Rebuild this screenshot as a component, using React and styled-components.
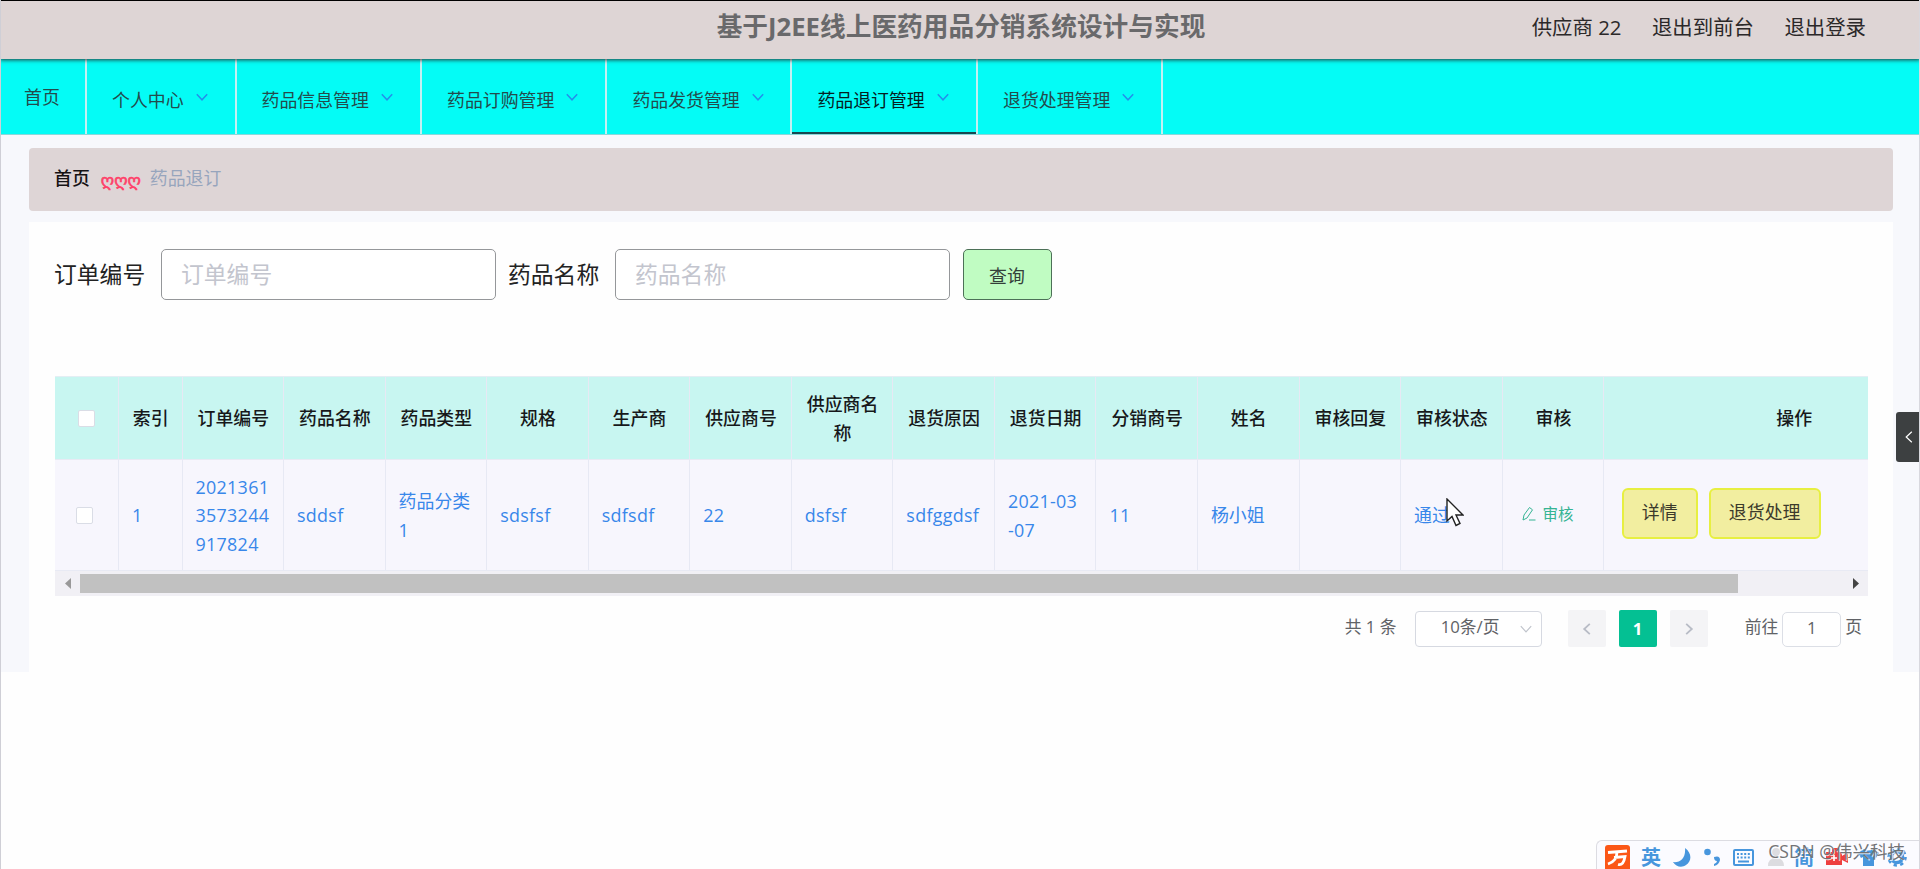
import React from 'react';

import styled, { createGlobalStyle } from 'styled-components';

const GlobalStyle = createGlobalStyle`
  * {
    box-sizing: border-box;
  }

  body {
    margin: 0;
    background: #fefefe;
    font-family: 'Open Sans', 'Noto Sans CJK SC', sans-serif;
    font-size: 17.9px;
    color: #303133;
    overflow: hidden;
  }
`;

const Page = styled.div`
  position: relative;
  height: 869px;
  overflow: hidden;
  border-left: 1px solid #cfcfd6;
  border-right: 1px solid #d8d8de;
`;

const Header = styled.header`
  position: relative;
  z-index: 2;
  display: grid;
  grid-template-columns: 1fr auto 1fr;
  height: 59px;
  margin: 0 -1px;
  padding-bottom: 4px;
  border-top: 1px solid #000;
  background: #ded5d5;
  box-shadow: 0 1px 4px rgba(40, 10, 10, 0.8);
  line-height: 53px;
`;

const Title = styled.h1`
  grid-column: 2;
  margin: 0 0 0 2px;
  font-size: 25.7px;
  font-weight: 700;
  line-height: 51px;
  color: #69696b;
`;

const UserLinks = styled.div`
  display: flex;
  justify-content: flex-end;
  gap: 30.5px;
  padding-right: 54px;
  font-size: 20.4px;
  color: #2b2829;
`;

const Nav = styled.nav`
  display: flex;
  height: 76px;
  margin: 0 -1px;
  border-bottom: 1px solid #8ad8da;
  background: #04fcf6;
`;

const NavItem = styled.div`
  display: flex;
  align-items: center;
  width: ${props => props.$width}px;
  padding: ${props => props.$home ? '0 0 2px 24px' : '4px 0 0 25px'};
  border-right: 2px solid #c4f0f2;
  box-shadow: ${props => props.$active ? 'inset 0 -2px 0 #174850' : 'none'};
  color: ${props => props.$active ? '#06201f' : '#234b4c'};

  svg {
    margin: -4px 0 0 12px;
  }
`;

const Main = styled.main`
  height: 537px;
  padding: 13px 26px 0 28px;
  background: #f7f8fc;
`;

const Breadcrumb = styled.div`
  display: flex;
  height: 63px;
  padding-left: 25px;
  border-radius: 4px;
  background: #ded5d6;
  line-height: 61px;
  color: #97a5bd;

  b {
    font-weight: 500;
    color: #151214;
  }
`;

const Separator = styled.span`
  width: 60px;
  padding: 2px 0 0 11px;
  font-family: 'DejaVu Sans', sans-serif;
  font-size: 17px;
  color: #ff4068;
  -webkit-text-stroke: 0.6px #ff4068;
`;

const Card = styled.section`
  height: 450px;
  margin-top: 11px;
  padding: 27px 25px 0 26px;
  background: #fefefe;
`;

const SearchForm = styled.div`
  display: flex;
  height: 127px;
  font-size: 22.8px;
  line-height: 52px;
  color: #222;
`;

const Label = styled.label`
  width: 107px;
  margin-left: -1px;
`;

const SearchInput = styled.input`
  width: 335px;
  height: 51px;
  margin-right: 13px;
  padding: 1px 19px 0;
  border: 1px solid #95979a;
  border-radius: 5px;
  background: #fff;
  font: inherit;

  &::placeholder {
    color: #c3c5ce;
  }
`;

const SearchButton = styled.button`
  width: 89px;
  height: 51px;
  padding: 0 1px 4px 0;
  border: 1px solid #4c7057;
  border-radius: 5px;
  background: #c0fcc2;
  font: inherit;
  font-size: 17.9px;
  color: #344039;
`;

const TableWrap = styled.div`
  width: 1813px;
  height: 220px;
  overflow: hidden;
  background: #f1f0f5;
`;

const Row = styled.div`
  display: grid;
  grid-template-columns: 64px 63.5px repeat(14, 101.55px) 380px;
  width: 1930px;
  height: ${props => props.$head ? 84 : 111}px;
  background: ${props => props.$head ? '#c8f6f1' : '#f7f6fd'};
  border-top: ${props => props.$head ? '1px solid #e4eef4' : 'none'};
  border-bottom: 1px solid #e8eaf4;
`;

const Cell = styled.div`
  display: flex;
  align-items: center;
  padding: 1px 12px 0 13px;
  border-right: 1px solid #e7e9f4;
  line-height: 28.2px;
  letter-spacing: ${props => props.$latin ? 0.3 : 0}px;
  word-break: break-all;
  white-space: pre-line;
  color: #3887ea;
`;

const HeadCell = styled(Cell)`
  justify-content: center;
  font-weight: 500;
  text-align: center;
  color: #17181a;
`;

const CheckCell = styled(Cell)`
  padding: 0 0 0 ${props => props.$head ? 23 : 21}px;
`;

const Checkbox = styled.span`
  width: 17px;
  height: 17px;
  border: 1px solid #dadde6;
  border-radius: 2px;
  background: #fff;
`;

const AuditLink = styled.span`
  display: flex;
  align-items: center;
  gap: 7px;
  margin: -2px 0 0 6px;
  font-size: 15.5px;
  white-space: nowrap;
  color: #35b493;
`;

const ActionCell = styled(Cell)`
  gap: 11px;
  padding: 0 0 3px 17.5px;
`;

const ActionButton = styled.button`
  width: ${props => props.$width}px;
  height: 51px;
  padding: 0 0 3px;
  border: 2px solid #e7ef41;
  border-radius: 6px;
  background: #f2eea0;
  font: inherit;
  color: #3c3a2c;
`;

const ScrollBar = styled.div`
  display: flex;
  align-items: center;
  width: 1813px;
  height: 25px;
  padding: 0 9px 0 10px;
`;

const Thumb = styled.div`
  width: 1658px;
  height: 19px;
  margin: 0 auto 0 9px;
  background: #c1c1c1;
`;

const Pagination = styled.div`
  display: flex;
  align-items: center;
  justify-content: flex-end;
  height: 37px;
  margin-top: 14px;
  padding-right: 6px;
  font-size: 16.8px;
  line-height: 34px;
  white-space: nowrap;
  color: #606266;
`;

const PageText = styled.span`
  margin-bottom: 3px;
`;

const SizeSelect = styled.div`
  display: flex;
  align-items: center;
  justify-content: space-between;
  width: 127px;
  height: 36px;
  margin: 0 26px 0 18px;
  padding: 0 9px 0 25px;
  border: 1px solid #d6d9e1;
  border-radius: 4px;
  background: #fff;
`;

const PageButton = styled.button`
  display: flex;
  align-items: center;
  justify-content: center;
  width: 38px;
  height: 37px;
  margin-right: 13px;
  padding: 0;
  border: 0;
  border-radius: 2px;
  background: ${props => props.$active ? '#04c093' : '#f4f4f6'};
  font: inherit;
  font-weight: 700;
  color: #fff;

  &:nth-of-type(3) {
    margin-right: 37px;
  }
`;

const Jumper = styled.input`
  width: 59px;
  height: 35px;
  margin: 1px 4px 0;
  padding: 0 0 3px;
  border: 1px solid #dcdfe6;
  border-radius: 5px;
  background: #fff;
  font: inherit;
  text-align: center;
  color: #606266;
`;

const SideHandle = styled.div`
  position: absolute;
  top: 412px;
  right: -1px;
  display: flex;
  align-items: center;
  justify-content: center;
  width: 24px;
  height: 50px;
  padding-left: 1px;
  border-radius: 3px 0 0 3px;
  background: #3d4041;
`;

const Pointer = styled.svg`
  position: absolute;
  top: 498px;
  left: 1445px;
`;

const ImeBar = styled.div`
  position: absolute;
  right: -1px;
  bottom: 0;
  display: flex;
  align-items: center;
  width: 324px;
  height: 29px;
  padding: 4px 0 0 8px;
  border: 1px solid #dcdce2;
  border-width: 1px 0 0 1px;
  border-radius: 6px 0 0 0;
  background: #fbfbff;
  font-family: 'Noto Sans CJK SC', sans-serif;
  font-size: 20px;
  font-weight: 700;
  line-height: 22px;
  color: #4796dd;
`;

const ImeSlot = styled.span`
  display: flex;
  width: ${props => props.$width}px;
`;

const Watermark = styled.div`
  position: absolute;
  right: 14px;
  bottom: 6px;
  font-size: 17.5px;
  line-height: 24px;
  white-space: nowrap;
  color: #737376;
  text-shadow: 1px 1px 0 rgba(255, 255, 255, 0.8);
`;

const menus = [
  { name: '个人中心', width: 149.5 },
  { name: '药品信息管理', width: 185.5 },
  { name: '药品订购管理', width: 185.4 },
  { name: '药品发货管理', width: 185 },
  { name: '药品退订管理', width: 185.6, active: true },
  { name: '退货处理管理', width: 185 }
];

const columns = [
  ['索引', '1'],
  ['订单编号', '20213613573244917824'],
  ['药品名称', 'sddsf'],
  ['药品类型', '药品分类1'],
  ['规格', 'sdsfsf'],
  ['生产商', 'sdfsdf'],
  ['供应商号', '22'],
  ['供应商名称', 'dsfsf'],
  ['退货原因', 'sdfggdsf'],
  ['退货日期', '2021-03\n-07'],
  ['分销商号', '11'],
  ['姓名', '杨小姐'],
  ['审核回复', ''],
  ['审核状态', '通过']
];

const rotations = { down: 0, left: 90, right: -90 };

function Chevron({ dir = 'down', color, size = 12, weight = 1.2 }) {
  return (
    <svg width={ size } height={ size } viewBox="0 0 12 12" fill="none">
      <path
        d="M0.8 3.2 6 8.8l5.2-5.6"
        stroke={ color }
        strokeWidth={ weight }
        transform={ `rotate(${rotations[dir]} 6 6)` }
      />
    </svg>
  );
}

function Arrow({ flip, color }) {
  return (
    <svg width="6" height="11" viewBox="0 0 6 11">
      <path d={ flip ? 'M0 0l6 5.5L0 11z' : 'M6 0L0 5.5 6 11z' } fill={ color } />
    </svg>
  );
}

function ImeTools() {
  return (
    <ImeBar>
      <ImeSlot $width={ 36 }>
        <svg width="25" height="25" viewBox="0 0 25 25">
          <rect width="25" height="28" rx="3" fill="#fb5717" />
          <path d="M3 7.5 22 6M12 7c0 6-3 10-9 12M9 12.500l11-1c-1 6-3 9-7 8" stroke="#fff" strokeWidth="2.8" fill="none" />
        </svg>
      </ImeSlot>
      <ImeSlot $width={ 32 }>英</ImeSlot>
      <ImeSlot $width={ 31 }>
        <svg width="18" height="19" viewBox="0 0 18 19">
          <path d="M12 0c7 5 7 13 1 17-4 3-10 2-13-3 7 1 13-4 12-14z" fill="#4796dd" />
        </svg>
      </ImeSlot>
      <ImeSlot $width={ 29 }>
        <svg width="17" height="18" viewBox="0 0 17 18">
          <circle cx="3.5" cy="4" r="3.3" fill="#4796dd" />
          <path d="M10 9q6-2 6 3-1 5-6 6v-2q3-1 3-3-3 0-3-4z" fill="#4796dd" />
        </svg>
      </ImeSlot>
      <ImeSlot $width={ 35 }>
        <svg width="21" height="17" viewBox="0 0 21 17">
          <rect x="1" y="1" width="19" height="15" rx="1" fill="#fbfbff" stroke="#4796dd" strokeWidth="2" />
          <path d="M4 5h14M4 8.500h14" stroke="#4796dd" strokeWidth="2" strokeDasharray="2 1.600" />
          <path d="M5 12.500h11" stroke="#4796dd" strokeWidth="2" />
        </svg>
      </ImeSlot>
      <ImeSlot $width={ 26 }>
        <svg width="16" height="18" viewBox="0 0 16 18">
          <circle cx="8" cy="4" r="4" fill="#dcdce0" />
          <path d="M0 18q0-8 8-8t8 8z" fill="#dcdce0" />
        </svg>
      </ImeSlot>
      <ImeSlot $width={ 32 }>简</ImeSlot>
      <ImeSlot $width={ 32 }>
        <svg width="22" height="18" viewBox="0 0 22 18">
          <path d="M0 4h6V0h7v4h3v4l6-4v11l-6-3v5H0z" fill="#ee4040" />
          <path d="M5 10h6M8 7v6" stroke="#fff" strokeWidth="1.6" />
        </svg>
      </ImeSlot>
      <ImeSlot $width={ 29 }>
        <svg width="21" height="18" viewBox="0 0 21 18">
          <path d="M6 1q4.500 3 9 0l6 4-3 5-2-1v9H5V9L3 10 0 5z" fill="#4796dd" />
        </svg>
      </ImeSlot>
      <svg width="20" height="20" viewBox="0 0 20 20" fill="none" stroke="#4796dd">
        <circle cx="10" cy="10" r="5.500" strokeWidth="3.600" />
        <circle cx="10" cy="10" r="8.500" strokeWidth="2.600" strokeDasharray="3.340" />
      </svg>
    </ImeBar>
  );
}

export default function App() {
  return (
    <Page>
      <GlobalStyle />
      <Header>
        <Title>基于J2EE线上医药用品分销系统设计与实现</Title>
        <UserLinks>
          <span>供应商 22</span>
          <span>退出到前台</span>
          <span>退出登录</span>
        </UserLinks>
      </Header>

      <Nav>
        <NavItem $width={ 87 } $home>首页</NavItem>
        {menus.map(menu => (
          <NavItem key={ menu.name } $width={ menu.width } $active={ menu.active }>
            {menu.name}
            <Chevron color="#2390ea" weight={ 1.5 } />
          </NavItem>
        ))}
      </Nav>

      <Main>
        <Breadcrumb>
          <b>首页</b>
          <Separator>ღღღ</Separator>
          <span>药品退订</span>
        </Breadcrumb>

        <Card>
          <SearchForm>
            <Label>订单编号</Label>
            <SearchInput placeholder="订单编号" />
            <Label>药品名称</Label>
            <SearchInput placeholder="药品名称" />
            <SearchButton>查询</SearchButton>
          </SearchForm>

          <TableWrap>
            <Row $head>
              <CheckCell $head><Checkbox /></CheckCell>
              {columns.map(([ title ]) => <HeadCell key={ title }>{title}</HeadCell>)}
              <HeadCell>审核</HeadCell>
              <HeadCell>操作</HeadCell>
            </Row>
            <Row>
              <CheckCell><Checkbox /></CheckCell>
              {columns.map(([ title, value ]) => (
                <Cell key={ title } $latin={ /^[\w-]/.test(value) }>{value}</Cell>
              ))}
              <Cell>
                <AuditLink>
                  <svg width="14" height="16" viewBox="0 0 14 16" fill="none" stroke="#35b493">
                    <path d="M2 9 7.500 1.500l3 2.300L5 12l-4 2zM7 14h6.500" />
                  </svg>
                  审核
                </AuditLink>
              </Cell>
              <ActionCell>
                <ActionButton $width={ 76 }>详情</ActionButton>
                <ActionButton $width={ 112 }>退货处理</ActionButton>
              </ActionCell>
            </Row>
            <ScrollBar>
              <Arrow color="#999" />
              <Thumb />
              <Arrow color="#444" flip />
            </ScrollBar>
          </TableWrap>

          <Pagination>
            <PageText>共 1 条</PageText>
            <SizeSelect>
              <PageText>10条/页</PageText>
              <Chevron color="#c0c4cc" />
            </SizeSelect>
            <PageButton><Chevron dir="left" color="#b8bcc6" weight={ 1.8 } /></PageButton>
            <PageButton $active>1</PageButton>
            <PageButton><Chevron dir="right" color="#b8bcc6" weight={ 1.8 } /></PageButton>
            <PageText>前往</PageText>
            <Jumper defaultValue="1" />
            <PageText>页</PageText>
          </Pagination>
        </Card>
      </Main>

      <SideHandle>
        <Chevron dir="left" color="#fff" />
      </SideHandle>
      <ImeTools />
      <Watermark>CSDN @伟兴科技</Watermark>
      <Pointer width="18" height="29" viewBox="0 0 18 29">
        <path d="M1 1v22l5-4.500 4 9 4-2-4-8.500h7z" fill="#fff" stroke="#222" strokeWidth="1.400" />
      </Pointer>
    </Page>
  );
}
